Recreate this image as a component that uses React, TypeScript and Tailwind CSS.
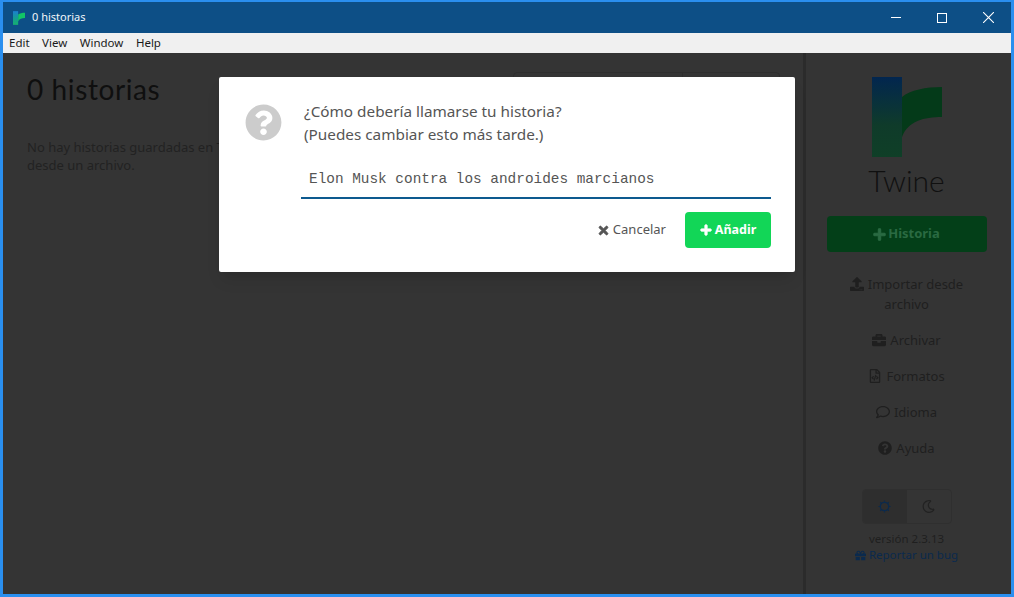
import { FaBriefcase, FaGift, FaPlus, FaQuestionCircle, FaRegComment, FaRegFileCode, FaRegMoon, FaTimes, FaUpload } from "react-icons/fa";

function Logo({ className, dim }: { className: string; dim?: boolean }) {
  const id = dim ? "dim" : "bright";
  return (
    <svg viewBox="0 0 70 80" className={className}>
      <defs>
        <linearGradient id={id} x1="0" y1="0" x2="0" y2="1">
          <stop offset="0" stopColor={dim ? "#02264f" : "#1b7fd0"} />
          <stop offset="0.6" stopColor={dim ? "#0f3b2a" : "#14a08a"} />
          <stop offset="1" stopColor={dim ? "#0f3f27" : "#16b070"} />
        </linearGradient>
      </defs>
      <path d="M30 20C38 13 54 10 70 10V40C52 40 36 44 30 60Z" fill={dim ? "#043a19" : "#12c466"} />
      <path d="M0 0H30V80H0Z" fill={`url(#${id})`} />
    </svg>
  );
}

function SunIcon() {
  return (
    <svg viewBox="0 0 14 14" className="w-[13px] h-[13px]" fill="none" stroke="#0b2a4d">
      <circle cx="7" cy="7" r="4.5" strokeWidth="1.4" />
      <path d="M7 0.5V2M7 12V13.5M0.5 7H2M12 7H13.5M2.4 2.4L3.5 3.5M10.5 10.5L11.6 11.6M2.4 11.6L3.5 10.5M10.5 3.5L11.6 2.4" strokeWidth="1.2" />
    </svg>
  );
}

function SideLink({ icon, children }: { icon: React.ReactNode; children: React.ReactNode }) {
  return (
    <div className="text-center text-[13px] leading-[20px] text-[#1f1f1f]">
      <span className="inline-block align-[-2px] mr-1 text-[14px]">{icon}</span>
      {children}
    </div>
  );
}

export default function App() {
  return (
    <div className="relative w-[1014px] h-[597px] overflow-hidden bg-[#2a8fef] pt-[2px] px-[3px] pb-[3px] flex flex-col font-['Noto_Sans',sans-serif]">
      <div className="h-[31px] bg-[#0d4f86] flex items-center shrink-0 text-white">
        <Logo className="w-[12px] h-[14px] ml-[10px] mr-[7px]" />
        <span className="text-[11px] text-[#f2f6fa]">0 historias</span>
        <div className="ml-auto flex h-full items-center">
          <div className="w-[46px] flex justify-center"><div className="w-[10px] h-[1px] bg-white" /></div>
          <div className="w-[46px] flex justify-center"><div className="w-[10px] h-[10px] border border-white" /></div>
          <div className="w-[46px] flex justify-center">
            <svg viewBox="0 0 10 10" className="w-[11px] h-[11px]"><path d="M0 0L10 10M10 0L0 10" stroke="white" strokeWidth="1" /></svg>
          </div>
        </div>
      </div>

      <div className="h-[20px] bg-[#f0f0f0] flex items-center shrink-0 pl-[6px] gap-[12.5px] text-[11.5px] text-[#1a1a1a]">
        <span>Edit</span>
        <span>View</span>
        <span>Window</span>
        <span>Help</span>
      </div>

      <div className="flex-1 flex bg-[#343434] min-h-0">
        <div className="flex-1 pl-[24px] pt-[17px] relative">
          <h1 className="font-['Lato',sans-serif] text-[28px] leading-[38px] text-[#0f0f0f] tracking-[0.6px]">0 historias</h1>
          <p className="mt-[30px] text-[13px] leading-[18px] text-[#222222]">
            No hay historias guardadas en Twine. Para empezar, crea una nueva historia o importa una existente
            <br />
            desde un archivo.
          </p>
          <div className="absolute left-[510px] top-[19px] w-[267px] h-[40px] rounded-[4px] border border-[#2e2e2e] flex justify-end">
            <div className="w-[97px] border-l border-[#2e2e2e]" />
          </div>
        </div>

        <aside className="w-[208px] shrink-0 border-l-[3px] border-[#2b2b2b] flex flex-col items-center pt-[24px] pr-[4px]">
          <Logo dim className="w-[70px] h-[80px]" />
          <div className="font-['Lato',sans-serif] font-light text-[30px] leading-[34px] mt-[6px] mb-[1px] text-[#101010]">Twine</div>
          <div className="mt-[18px] w-[160px] h-[36px] rounded-[4px] bg-[#033f18] flex items-center justify-center gap-[2px] text-[13px] font-bold text-[#2a6a42]">
            <FaPlus className="text-[13px]" stroke="currentColor" strokeWidth={40} /> Historia
          </div>
          <div className="mt-[22px] w-[140px] flex flex-col gap-[16px]">
            <SideLink icon={<FaUpload />}>Importar desde archivo</SideLink>
            <SideLink icon={<FaBriefcase />}>Archivar</SideLink>
            <SideLink icon={<FaRegFileCode />}>Formatos</SideLink>
            <SideLink icon={<FaRegComment />}>Idioma</SideLink>
            <SideLink icon={<FaQuestionCircle />}>Ayuda</SideLink>
          </div>
          <div className="mt-[31px] flex w-[90px] h-[35px] rounded-[4px] border border-[#2f2f2f]">
            <div className="flex-1 bg-[#2e2e2e] rounded-l-[4px] flex items-center justify-center"><SunIcon /></div>
            <div className="flex-1 flex items-center justify-center text-[#222222] text-[13px]"><FaRegMoon /></div>
          </div>
          <div className="mt-[7px] text-[11.5px] leading-[16px] text-[#1f1f1f]">versión 2.3.13</div>
          <div className="text-[11.5px] leading-[16px] text-[#0b2a4d] flex items-center gap-[3px]">
            <FaGift className="text-[11px]" /> Reportar un bug
          </div>
        </aside>
      </div>

      {/* dialog over the dimmed page */}
      <div className="absolute left-[219px] top-[77px] w-[576px] h-[195px] bg-white rounded-[2px] shadow-lg pl-[26px] pr-[24px] pt-[23px]">
        <div className="flex gap-[19px]">
          <FaQuestionCircle className="w-[37px] h-[37px] text-[#cccccc] shrink-0 mt-[4px]" />
          <div className="flex-1 min-w-0">
            <div className="ml-[3px] text-[15.3px] leading-[23px] text-[#555555]">
              ¿Cómo debería llamarse tu historia?
              <br />
              (Puedes cambiar esto más tarde.)
            </div>
            <div className="mt-[16px] h-[37px] border-b-2 border-[#0d5a8f] pl-[8px] pt-[7px] font-['Liberation_Mono',monospace] text-[14.4px] leading-[20px] text-[#555555]">
              Elon Musk contra los androides marcianos
            </div>
            <div className="mt-[13px] flex items-center justify-end">
              <div className="flex items-center gap-[3px] text-[13px] text-[#555555]">
                <FaTimes className="text-[13px]" stroke="currentColor" strokeWidth={30} /> Cancelar
              </div>
              <div className="ml-[19px] w-[86px] h-[36px] rounded-[4px] bg-[#12d657] text-white flex items-center justify-center gap-[3px] text-[12.5px] font-bold">
                <FaPlus className="text-[12px]" stroke="currentColor" strokeWidth={40} /> Añadir
              </div>
            </div>
          </div>
        </div>
      </div>
    </div>
  );
}
